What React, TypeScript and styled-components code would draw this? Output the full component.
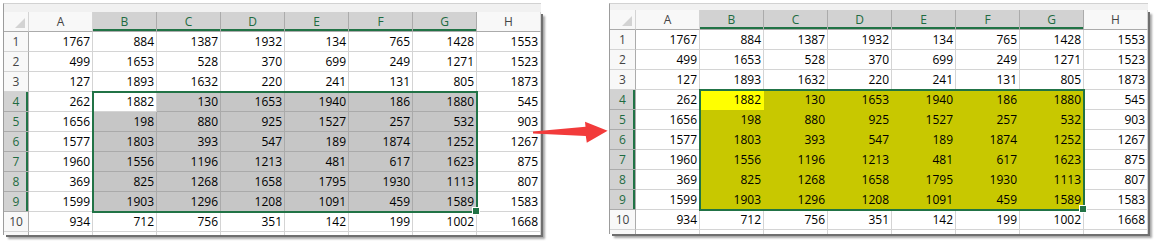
import React, { FC } from "react";
import styled, { createGlobalStyle } from "styled-components";

const GlobalStyle = createGlobalStyle`
  html, body { margin: 0; padding: 0; background: #ffffff; }
  body { font-family: "Open Sans", "Liberation Sans", Arial, sans-serif; }
`;

type Tone = "plain" | "gray" | "olive" | "yellow";

const tones: Record<Tone, { bg: string; line: string }> = {
  plain: { bg: "#ffffff", line: "#d4d4d4" },
  gray: { bg: "#c6c6c6", line: "#aaaaaa" },
  olive: { bg: "#c8c800", line: "#c8c800" },
  yellow: { bg: "#ffff00", line: "#ffff00" },
};

const GREEN = "#217346";
const COL_W = 64;
const ROW_H = 20;
const columns = ["A", "B", "C", "D", "E", "F", "G", "H"];

const data: number[][] = [
  [1767, 884, 1387, 1932, 134, 765, 1428, 1553],
  [499, 1653, 528, 370, 699, 249, 1271, 1523],
  [127, 1893, 1632, 220, 241, 131, 805, 1873],
  [262, 1882, 130, 1653, 1940, 186, 1880, 545],
  [1656, 198, 880, 925, 1527, 257, 532, 903],
  [1577, 1803, 393, 547, 189, 1874, 1252, 1267],
  [1960, 1556, 1196, 1213, 481, 617, 1623, 875],
  [369, 825, 1268, 1658, 1795, 1930, 1113, 807],
  [1599, 1903, 1296, 1208, 1091, 459, 1589, 1583],
  [934, 712, 756, 351, 142, 199, 1002, 1668],
];

const inSelection = (r: number, c: number) => r >= 3 && r <= 8 && c >= 1 && c <= 6;

const Page = styled.div`
  position: relative;
  display: flex;
  align-items: flex-start;
  gap: 68px;
  width: 1157px;
  height: 242px;
  padding: 3px 0 0 3px;
  box-sizing: border-box;
  background: #ffffff;
  overflow: hidden;
`;

const Frame = styled.div`
  display: flex;
  flex-direction: column;
  border-left: 1px solid #9c9c9c;
  border-top: 1px solid #d2d2d2;
`;

const TopBand = styled.div<{ $h: number }>`
  height: ${({ $h }) => $h}px;
  background: #f1f1f1;
`;

const Grid = styled.div<{ $rh: number; $tail: number }>`
  position: relative;
  display: grid;
  grid-template-columns: ${({ $rh }) => $rh}px repeat(8, ${COL_W}px);
  grid-template-rows: repeat(11, ${ROW_H}px) ${({ $tail }) => $tail}px;
  box-shadow: 2px 2px 0 #6f6f6f, 4px 4px 2px rgba(0, 0, 0, 0.35);
  font-size: 12px;
  color: #000000;
`;

const Corner = styled.div`
  position: relative;
  box-sizing: border-box;
  background: #f8f8f8;
  border-right: 1px solid #d4d4d4;
  border-bottom: 1px solid #ababab;
  &::after {
    content: "";
    position: absolute;
    right: 3px;
    bottom: 3px;
    border-left: 10px solid transparent;
    border-bottom: 10px solid #d3d3d3;
  }
`;

const ColHead = styled.div<{ $selected: boolean }>`
  box-sizing: border-box;
  display: flex;
  align-items: center;
  justify-content: center;
  background: ${({ $selected }) => ($selected ? "#d2d2d2" : "#f8f8f8")};
  color: ${({ $selected }) => ($selected ? "#1e6b41" : "#444444")};
  border-right: 1px solid ${({ $selected }) => ($selected ? "#ababab" : "#d4d4d4")};
  border-bottom: 1px solid #ababab;
  box-shadow: ${({ $selected }) => ($selected ? `inset 0 -2px 0 ${GREEN}` : "none")};
`;

const RowHead = styled.div<{ $selected: boolean }>`
  box-sizing: border-box;
  display: flex;
  align-items: center;
  justify-content: center;
  background: ${({ $selected }) => ($selected ? "#d2d2d2" : "#f8f8f8")};
  color: ${({ $selected }) => ($selected ? "#1e6b41" : "#444444")};
  border-right: 1px solid #ababab;
  border-bottom: 1px solid ${({ $selected }) => ($selected ? "#ababab" : "#d4d4d4")};
  box-shadow: ${({ $selected }) => ($selected ? `inset -2px 0 0 ${GREEN}` : "none")};
`;

const Cell = styled.div<{ $tone: Tone }>`
  box-sizing: border-box;
  background: ${({ $tone }) => tones[$tone].bg};
  border-right: 1px solid ${({ $tone }) => tones[$tone].line};
  border-bottom: 1px solid ${({ $tone }) => tones[$tone].line};
  text-align: right;
  padding-right: 2px;
  line-height: 20px;
  white-space: nowrap;
`;

const TailHead = styled.div`
  background: #f8f8f8;
  border-right: 1px solid #ababab;
`;

const TailCell = styled.div`
  background: #ffffff;
  border-right: 1px solid #d4d4d4;
`;

const Selection = styled.div<{ $rh: number }>`
  position: absolute;
  left: ${({ $rh }) => $rh + COL_W - 1}px;
  top: ${ROW_H * 4 - 1}px;
  width: ${COL_W * 6 + 2}px;
  height: ${ROW_H * 6 + 2}px;
  box-sizing: border-box;
  border: 2px solid ${GREEN};
  pointer-events: none;
`;

const FillHandle = styled.div`
  position: absolute;
  right: -4px;
  bottom: -4px;
  width: 6px;
  height: 6px;
  background: ${GREEN};
  border: 1px solid #ffffff;
`;

const Arrow = styled.svg`
  position: absolute;
  left: 530px;
  top: 118px;
  width: 82px;
  height: 28px;
`;

type SheetProps = {
  filled: boolean;
  band: number;
  rh: number;
  tail: number;
};

const Sheet: FC<SheetProps> = ({ filled, band, rh, tail }) => {
  const toneOf = (r: number, c: number): Tone => {
    if (!inSelection(r, c)) return "plain";
    if (r === 3 && c === 1) return filled ? "yellow" : "plain";
    return filled ? "olive" : "gray";
  };
  return (
    <Frame>
      <TopBand $h={band} />
      <Grid $rh={rh} $tail={tail}>
        <Corner />
        {columns.map((col, c) => (
          <ColHead key={col} $selected={c >= 1 && c <= 6}>
            {col}
          </ColHead>
        ))}
        {data.map((row, r) => (
          <React.Fragment key={r}>
            <RowHead $selected={r >= 3 && r <= 8}>{r + 1}</RowHead>
            {row.map((v, c) => (
              <Cell key={c} $tone={toneOf(r, c)}>
                {v}
              </Cell>
            ))}
          </React.Fragment>
        ))}
        <TailHead />
        {columns.map((col) => (
          <TailCell key={col} />
        ))}
        <Selection $rh={rh}>
          <FillHandle />
        </Selection>
      </Grid>
    </Frame>
  );
};

export default function App() {
  return (
    <>
      <GlobalStyle />
      <Page>
        <Sheet filled={false} band={8} rh={25} tail={3} />
        <Sheet filled band={6} rh={26} tail={4} />
        <Arrow viewBox="530 118 82 28">
          <polygon
            points="533,131.4 585.5,126.8 585,121.7 607.6,130.8 586.8,142.7 585.8,136 533,133.4"
            fill="#f23b3b"
          />
        </Arrow>
      </Page>
    </>
  );
}
